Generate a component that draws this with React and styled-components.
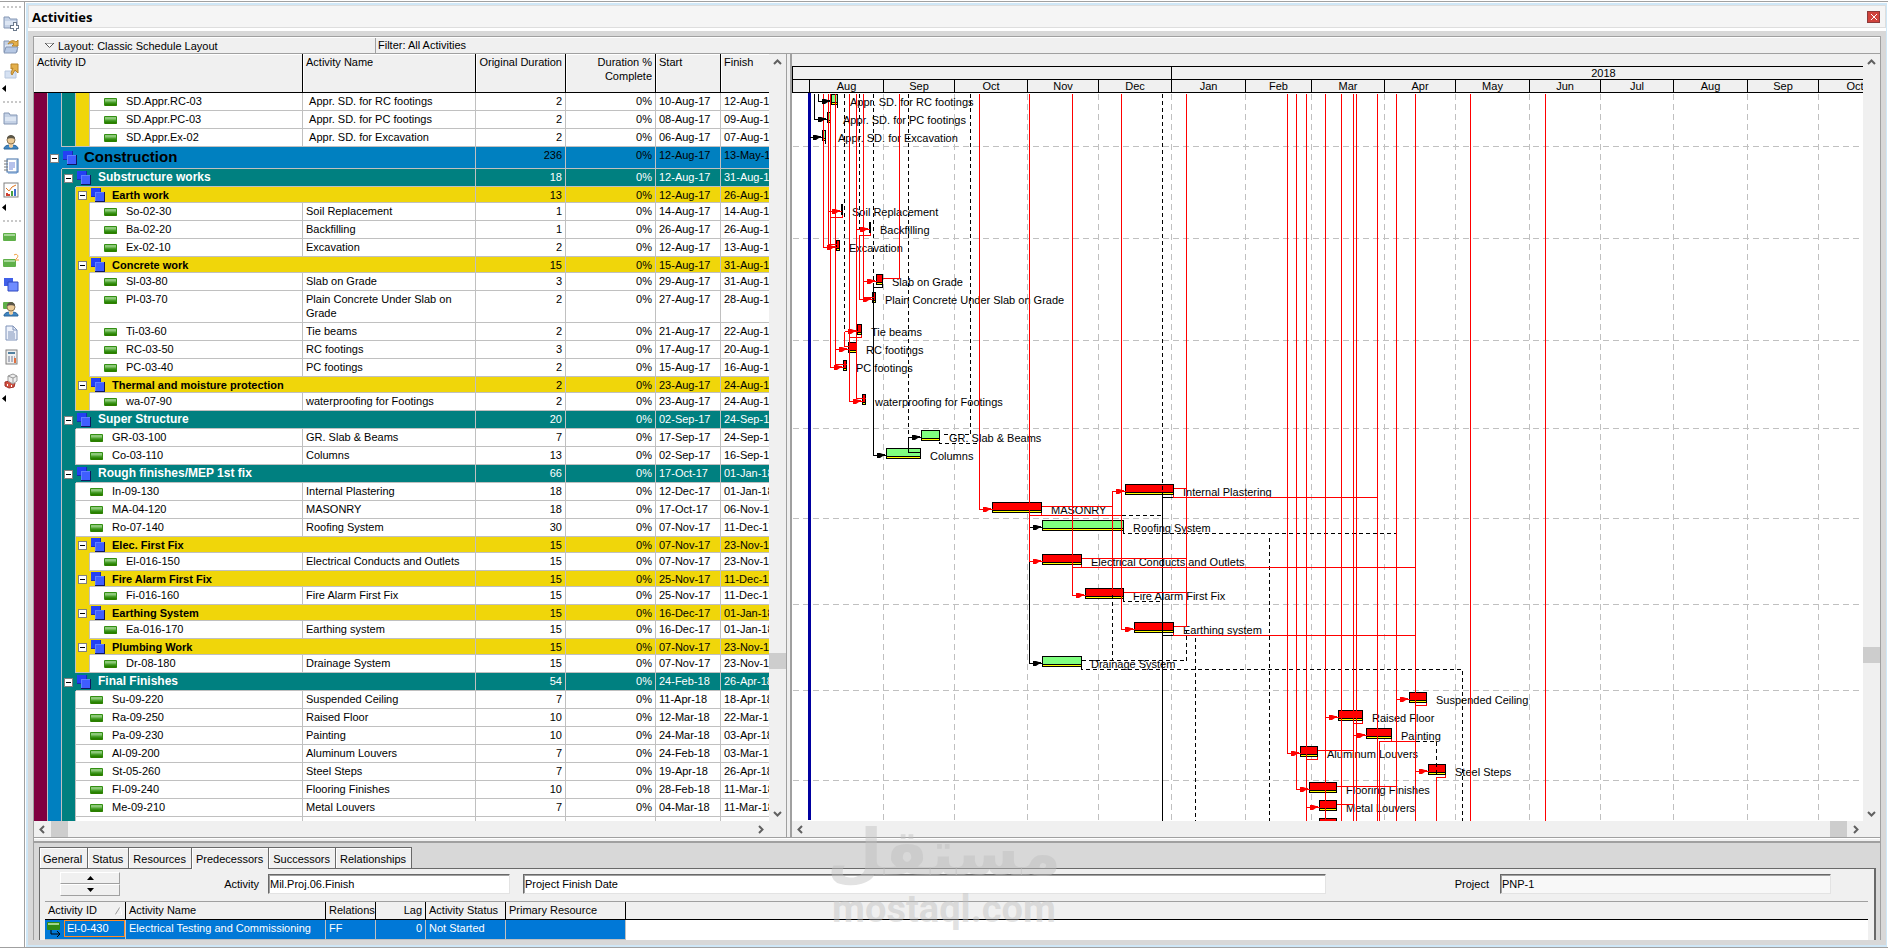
import React from "react";
import styled, { createGlobalStyle } from "styled-components";

const BANDS = ["#800040", "#0080c0", "#008080", "#f0d60a"];

// depth = how many bands stand before the row
const group = (depth, name, dur, start, finish) => ({ group: true, depth, name, dur, start, finish });
const act = (depth, id, name, dur, start, finish) => ({ depth, id, name, dur, start, finish });

const ROWS = [
  act(4, "SD.Appr.RC-03", "\u00a0Appr. SD. for RC footings", 2, "10-Aug-17", "12-Aug-17"),
  act(4, "SD.Appr.PC-03", "\u00a0Appr. SD. for PC footings", 2, "08-Aug-17", "09-Aug-17"),
  act(4, "SD.Appr.Ex-02", "\u00a0Appr. SD. for Excavation", 2, "06-Aug-17", "07-Aug-17"),
  group(1, "Construction", 236, "12-Aug-17", "13-May-18"),
  group(2, "Substructure works", 18, "12-Aug-17", "31-Aug-17"),
  group(3, "Earth work", 13, "12-Aug-17", "26-Aug-17"),
  act(4, "So-02-30", "Soil Replacement", 1, "14-Aug-17", "14-Aug-17"),
  act(4, "Ba-02-20", "Backfilling", 1, "26-Aug-17", "26-Aug-17"),
  act(4, "Ex-02-10", "Excavation", 2, "12-Aug-17", "13-Aug-17"),
  group(3, "Concrete work", 15, "15-Aug-17", "31-Aug-17"),
  act(4, "Sl-03-80", "Slab on Grade", 3, "29-Aug-17", "31-Aug-17"),
  act(4, "Pl-03-70", "Plain Concrete Under Slab on Grade", 2, "27-Aug-17", "28-Aug-17"),
  act(4, "Ti-03-60", "Tie beams", 2, "21-Aug-17", "22-Aug-17"),
  act(4, "RC-03-50", "RC footings", 3, "17-Aug-17", "20-Aug-17"),
  act(4, "PC-03-40", "PC footings", 2, "15-Aug-17", "16-Aug-17"),
  group(3, "Thermal and moisture protection", 2, "23-Aug-17", "24-Aug-17"),
  act(4, "wa-07-90", "waterproofing for Footings", 2, "23-Aug-17", "24-Aug-17"),
  group(2, "Super Structure", 20, "02-Sep-17", "24-Sep-17"),
  act(3, "GR-03-100", "GR. Slab & Beams", 7, "17-Sep-17", "24-Sep-17"),
  act(3, "Co-03-110", "Columns", 13, "02-Sep-17", "16-Sep-17"),
  group(2, "Rough finishes/MEP 1st fix", 66, "17-Oct-17", "01-Jan-18"),
  act(3, "In-09-130", "Internal Plastering", 18, "12-Dec-17", "01-Jan-18"),
  act(3, "MA-04-120", "MASONRY", 18, "17-Oct-17", "06-Nov-17"),
  act(3, "Ro-07-140", "Roofing System", 30, "07-Nov-17", "11-Dec-17"),
  group(3, "Elec. First Fix", 15, "07-Nov-17", "23-Nov-17"),
  act(4, "El-016-150", "Electrical Conducts and Outlets", 15, "07-Nov-17", "23-Nov-17"),
  group(3, "Fire Alarm First Fix", 15, "25-Nov-17", "11-Dec-17"),
  act(4, "Fi-016-160", "Fire Alarm First Fix", 15, "25-Nov-17", "11-Dec-17"),
  group(3, "Earthing System", 15, "16-Dec-17", "01-Jan-18"),
  act(4, "Ea-016-170", "Earthing system", 15, "16-Dec-17", "01-Jan-18"),
  group(3, "Plumbing Work", 15, "07-Nov-17", "23-Nov-17"),
  act(4, "Dr-08-180", "Drainage System", 15, "07-Nov-17", "23-Nov-17"),
  group(2, "Final Finishes", 54, "24-Feb-18", "26-Apr-18"),
  act(3, "Su-09-220", "Suspended Ceiling", 7, "11-Apr-18", "18-Apr-18"),
  act(3, "Ra-09-250", "Raised Floor", 10, "12-Mar-18", "22-Mar-18"),
  act(3, "Pa-09-230", "Painting", 10, "24-Mar-18", "03-Apr-18"),
  act(3, "Al-09-200", "Aluminum Louvers", 7, "24-Feb-18", "03-Mar-18"),
  act(3, "St-05-260", "Steel Steps", 7, "19-Apr-18", "26-Apr-18"),
  act(3, "Fl-09-240", "Flooring Finishes", 10, "28-Feb-18", "11-Mar-18"),
  act(3, "Me-09-210", "Metal Louvers", 7, "04-Mar-18", "11-Mar-18"),
  act(3, "", "", "", "", ""),
];

const rowHeight = (row) => {
  if (!row.group) return row.id === "Pl-03-70" ? 32 : 18;
  return { 1: 22, 2: 18, 3: 16 }[row.depth];
};

// name, width
const MONTHS = [
  ["", 17], ["Aug", 74], ["Sep", 71], ["Oct", 73], ["Nov", 71], ["Dec", 73], ["Jan", 74], ["Feb", 66],
  ["Mar", 73], ["Apr", 71], ["May", 74], ["Jun", 71], ["Jul", 73], ["Aug", 74], ["Sep", 71], ["Oct", 73],
];

const MONTH_X = [883, 954, 1027, 1098, 1171, 1245, 1311, 1384, 1455, 1529, 1600, 1673, 1747, 1818];
const GRID_Y = [146, 238, 340, 428, 518, 604, 690, 780];

// x1, x2, row top, colour, label
const BARS = [
  [831, 837, 93, "g", "Appr. SD. for RC footings", 13],
  [827, 830, 111, "g", "Appr. SD. for PC footings", 13],
  [822, 825, 129, "g", "Appr. SD. for Excavation", 13],
  [841, 842, 203, "r", "Soil Replacement"],
  [869, 870, 221, "r", "Backfilling"],
  [836, 839, 239, "r", "Excavation"],
  [876, 882, 273, "r", "Slab on Grade"],
  [872, 875, 291, "r", "Plain Concrete Under Slab on Grade"],
  [857, 861, 323, "r", "Tie beams"],
  [848, 856, 341, "r", "RC footings"],
  [843, 846, 359, "r", "PC footings"],
  [862, 865, 393, "r", "waterproofing for Footings"],
  [921, 939, 429, "g", "GR. Slab & Beams"],
  [886, 920, 447, "g", "Columns"],
  [1125, 1173, 483, "r", "Internal Plastering"],
  [992, 1041, 501, "r", "MASONRY"],
  [1042, 1123, 519, "g", "Roofing System"],
  [1042, 1081, 553, "r", "Electrical Conducts and Outlets"],
  [1085, 1123, 587, "r", "Fire Alarm First Fix"],
  [1134, 1173, 621, "r", "Earthing system"],
  [1042, 1081, 655, "g", "Drainage System"],
  [1409, 1426, 691, "r", "Suspended Ceiling"],
  [1338, 1362, 709, "r", "Raised Floor"],
  [1366, 1391, 727, "r", "Painting"],
  [1300, 1317, 745, "r", "Aluminum Louvers"],
  [1428, 1445, 763, "r", "Steel Steps"],
  [1309, 1336, 781, "r", "Flooring Finishes"],
  [1319, 1336, 799, "r", "Metal Louvers"],
  [1319, 1336, 817, "r", ""],
];

const DASHED_LINKS = [
  "M844 93V331", "M859 93V229", "M873 93V287", "M908 93V434", "M970 93V434H940",
  "M939 441V443H979", "M1162 93V497", "M1121 515H1162", "M1123 530V533H1396", "M1269 537V820",
  "M1112 594V660", "M1123 598V601H1162", "M1081 660H1186V630", "M1195 637V820",
  "M1081 666V669H1462V820", "M1415 741H1436V777",
];

const BLACK_LINKS = [
  "M818 93V101H831", "M814 93V119H827", "M809 137H822", "M837 104V107", "M825 140V143",
  "M882 284V287H873V455H886", "M920 452H908V437H921", "M1029 527H1042", "M1029 561V663H1042",
  "M1173 497H1162V820", "M1162 635H1173",
];

const RED_LINKS = [
  "M823 93V247H836", "M828 93V244H838", "M828 211H841", "M830 93V367H843", "M842 214V217H830",
  "M835 93V364H846", "M835 349H848", "M849 93V401H862", "M861 334V337H849", "M844 331H857M844 331V346H849",
  "M856 93V398H865", "M856 229H869", "M870 232V235H859V299H872", "M863 93V297H874", "M863 281H876",
  "M899 93V278H882", "M979 93V509H992", "M1029 93V561H1042", "M1041 512V515M1029 515H1121",
  "M1072 93V595H1085", "M1081 564V567M1072 567H1415", "M1041 506H1112M1112 592V491H1125",
  "M1121 93V629H1134", "M1186 93V626H1173", "M1081 558H1186", "M1123 592H1186", "M1173 488H1186",
  "M1173 494V497H1377", "M1173 632V635H1415", "M1287 93V753H1300", "M1296 93V789H1309",
  "M1306 93V820M1306 807H1319", "M1306 759H1317V756", "M1325 93V820M1325 717H1338", "M1341 93V820",
  "M1353 93V820M1353 735H1366", "M1353 723H1362V720", "M1317 750H1353", "M1336 804H1353", "M1356 93V820",
  "M1377 93V820", "M1379 820V741H1415", "M1391 738V741", "M1436 820V777H1445V774", "M1336 786H1396",
  "M1396 93V820M1396 699H1409", "M1415 93V820M1415 771H1428", "M1415 705H1426V702", "M1470 93V820",
  "M1545 93V820",
];

// tip x, y, colour
const ARROWS = [
  [831, 101, "#000"], [827, 119, "#000"], [822, 137, "#000"], [886, 455, "#000"], [921, 437, "#000"],
  [1042, 527, "#000"], [1042, 663, "#000"], [836, 247, "red"], [841, 211, "red"], [843, 367, "red"],
  [848, 349, "red"], [862, 401, "red"], [857, 331, "red"], [869, 229, "red"], [872, 299, "red"],
  [876, 281, "red"], [992, 509, "red"], [1042, 561, "red"], [1085, 595, "red"], [1125, 491, "red"],
  [1134, 629, "red"], [1300, 753, "red"], [1309, 789, "red"], [1319, 807, "red"], [1338, 717, "red"],
  [1366, 735, "red"], [1409, 699, "red"], [1428, 771, "red"],
];

const ActivityIcon = () => (
  <svg width="13" height="8" viewBox="0 0 13 8" aria-hidden="true">
    <rect width="13" height="8" rx="1" fill="#338f12" />
    <path d="M1 1h11v2H1z" fill="#8cc878" />
    <path d="M1 3h11v1H1z" fill="#6cb652" />
    <path d="M1 4h11v1H1z" fill="#4a9e2a" />
    <path d="M1 6h12v1l-1 1H1z" fill="#2b8000" />
  </svg>
);

const WbsIcon = () => (
  <svg width="14" height="14" viewBox="0 0 14 14" shapeRendering="crispEdges" aria-hidden="true">
    <rect x="0" y="0" width="10" height="9" fill="#1a2ab0" />
    <rect x="0" y="0" width="9" height="8" fill="#2440f4" />
    <rect x="4" y="4" width="10" height="10" fill="#101860" />
    <rect x="4" y="4" width="9" height="9" fill="#6080ff" />
    <rect x="5" y="5" width="8" height="8" fill="#3f5eff" />
  </svg>
);

const Chevron = ({ dir }) => {
  const turn = { up: 0, right: 90, down: 180, left: 270 }[dir];
  return (
    <svg width="9" height="9" viewBox="0 0 9 9" aria-hidden="true">
      <path d="M1 6L4.500 2.500L8 6" transform={`rotate(${turn} 4.500 4.500)`} fill="none" stroke="#606060" strokeWidth="2" />
    </svg>
  );
};

const Folder = ({ y = 3 }) => (
  <g>
    <path d={`M1 ${y}h5l1 2h7v9H1z`} fill="#c5d2e6" stroke="#8496b4" />
    <path d={`M2 ${y + 4}h11v4H2z`} fill="#dde6f3" />
  </g>
);
const Person = () => (
  <g>
    <path d="M1 15c0-3 3-4 7-4s7 1 7 4z" fill="#3f86c4" stroke="#2a6498" />
    <path d="M6 10h4v3l-2 1-2-1z" fill="#f0cfa0" />
    <circle cx="8" cy="6" r="4" fill="#eccb98" stroke="#8a7450" />
    <path d="M4 5c0-3 2-4 4-4s4 1 4 4c-2-1-6-1-8 0z" fill="#5b5648" />
  </g>
);

const TOOLS = [
  ["Add project", <><Folder y={2} /><path d="M12 7v9M7 12h9" stroke="#6c7a8c" strokeWidth="4" /><path d="M12 8v7M8 12h7" stroke="#fff" strokeWidth="2" /></>],
  ["Open project", <><Folder y={2} /><path d="M1 14l2-6h12l-2 6z" fill="#b6c8e4" stroke="#8496b4" /><path d="M5 5c2-4 6-4 8-2l2-2v6h-6l2-2c-2-2-4-1-6 0z" fill="#e4b04c" stroke="#b98428" /></>],
  ["Close project", <><path d="M2 8h11v7H2z" fill="#d5e1f2" stroke="#b6c6dd" /><path d="M8 1h7v9l-3-3-3 5-1-2 2-5-2 1z" fill="#e4b04c" stroke="#b98428" /></>],
  "more",
  "grip",
  ["Projects", <Folder />],
  ["Resources", <Person />],
  ["Reports", <><rect x="4" y="1" width="11" height="13" fill="#fff" stroke="#3f6ea8" /><path d="M14 2v13H5" fill="none" stroke="#5b8cc8" /><path d="M6 5h6M6 7h6M6 9h6M6 11h4" stroke="#6c84d8" /><path d="M1 3h4M1 6h4M1 9h4M1 12h4" stroke="#777" /></>],
  ["Tracking", <><rect x="1" y="1" width="14" height="14" fill="#fff" stroke="#808080" /><path d="M3 6l3 3 3-4 4-2" fill="none" stroke="#e07820" /><path d="M4 14v-3M6 14v-2" stroke="#d04030" strokeWidth="2" /><path d="M9 14V9" stroke="#48a040" strokeWidth="2" /><path d="M12 14V7" stroke="#4070d0" strokeWidth="2" /></>],
  "more",
  "grip",
  ["Activities", <><rect x="0" y="4" width="13" height="8" rx="1" fill="#5fb049" /><path d="M1 6h11" stroke="#a5d796" strokeWidth="2" /></>],
  ["Steps", <><rect x="0" y="6" width="13" height="8" rx="1" fill="#5fb049" /><path d="M1 8h11" stroke="#a5d796" strokeWidth="2" /><path d="M11 2c3-2 5 1 3 3l-2 2h4" fill="none" stroke="#f0a040" /></>],
  ["WBS", <><path d="M1 1h9v8H1z" fill="#4060e8" /><path d="M5 5h10v9H5z" fill="#6f8cff" stroke="#3048c0" /></>],
  ["Assignments", <><rect x="0" y="1" width="10" height="7" rx="1" fill="#5fb049" /><Person /></>],
  ["Documents", <><path d="M3 1h7l4 4v10H3z" fill="#eef2fb" stroke="#7f92b8" /><path d="M10 1v4h4M5 7h6M5 9h7M5 11h7M5 13h7" fill="none" stroke="#7f92b8" /></>],
  ["Expenses", <><rect x="3" y="1" width="11" height="14" fill="#f0f0f0" stroke="#808080" /><path d="M5 4h7" stroke="#5080a0" strokeWidth="2" /><path d="M5 8h7M5 10h7M5 12h7" stroke="#707890" strokeDasharray="2 1" /><path d="M11 9h2v5h-2z" fill="#e07040" /></>],
  ["Risks", <><path d="M2 9l5-1 5 2-1 4-5 1-4-2z" fill="#d05040" stroke="#a03028" /><path d="M4 12h1M8 13h1" stroke="#fff" strokeWidth="2" /><path d="M5 3l5-2 4 2v5l-4 3-5-3z" fill="#eee" stroke="#999" /><path d="M5 3l5 2 4-2M10 5v6" fill="none" stroke="#999" /></>],
  "more",
];

const SideTools = () => (
  <Toolbar aria-label="Directory">
    <Grip />
    {TOOLS.map((tool, i) => {
      if (tool === "grip") return <Grip key={i} />;
      if (tool === "more") {
        return (
          <MoreButton key={i} aria-label="More">
            <svg width="4" height="7" viewBox="0 0 4 7"><path d="M4 0v7L0 3.500z" /></svg>
          </MoreButton>
        );
      }
      return (
        <ToolButton key={i} aria-label={tool[0]}>
          <svg width="16" height="16" viewBox="0 0 16 16">{tool[1]}</svg>
        </ToolButton>
      );
    })}
  </Toolbar>
);

const ScrollBar = ({ vertical, before, after }) => (
  <Bar $vertical={vertical}>
    <BarButton aria-label="Scroll back"><Chevron dir={vertical ? "up" : "left"} /></BarButton>
    <BarSpace $grow={before} />
    <Thumb />
    <BarSpace $grow={after} />
    <BarButton aria-label="Scroll forward"><Chevron dir={vertical ? "down" : "right"} /></BarButton>
  </Bar>
);

const GridRow = ({ row, next }) => {
  const h = rowHeight(row);
  const bands = BANDS.slice(0, row.depth);
  const cut = next && next.group ? next.depth : 9;
  return (
    <Row $bg={row.group ? BANDS[row.depth] : "#fff"} $light={row.group && row.depth === 2}>
      <IdCell colSpan={row.group ? 2 : 1}>
        <Tree $h={h}>
          {bands.map((color, i) => <Band key={color} $color={color} $end={!row.group && i > cut} />)}
          {row.group && (
            <Stub>
              <Toggle aria-label={"Collapse " + row.name} />
            </Stub>
          )}
          <TreeBody $level={row.group ? row.depth : 0}>
            {row.group ? <WbsIcon /> : row.id && <ActivityIcon />}
            <TreeText $level={row.group ? row.depth : 0}>{row.group ? row.name : row.id}</TreeText>
          </TreeBody>
        </Tree>
      </IdCell>
      {!row.group && <Cell>{row.name}</Cell>}
      <Cell $right>{row.dur}</Cell>
      <Cell $right>{row.dur === "" ? "" : "0%"}</Cell>
      <Cell>{row.start}</Cell>
      <Cell>{row.finish}</Cell>
    </Row>
  );
};

const Gantt = () => (
  <Chart role="img" aria-label="Gantt chart">
    {/* coordinates below count from the window corner; the chart area starts at 792, 93 */}
    <g transform="translate(-792 -93)">
      <g shapeRendering="crispEdges" fill="none" stroke="#c0c0c0" strokeDasharray="6 4" transform="translate(0.500 0.500)">
        {MONTH_X.map((x) => <path key={x} d={`M${x} 93V820`} />)}
        {GRID_Y.map((y) => <path key={y} d={`M792 ${y}H4000`} />)}
      </g>
      <path d="M808 93h3v727h-3z" fill="#0000a0" />
      {BARS.map(([x1, x2, top, kind, label, gap = 10], i) => (
        <g key={i}>
          <rect x={x1} y={top + 1} width={x2 - x1 + 1} height="11" fill="#000" />
          {x2 - x1 > 1 && <rect x={x1 + 1} y={top + 2} width={x2 - x1 - 1} height="7" fill={kind === "r" ? "#f00" : "#80ff80"} />}
          {x2 - x1 > 1 && <rect x={x1 + 1} y={top + 10} width={x2 - x1 - 1} height="1" fill="#ff0" />}
          <text x={x2 + gap} y={top + 13}>{label}</text>
        </g>
      ))}
      <g shapeRendering="crispEdges" fill="none" transform="translate(0.500 0.500)">
        <path d={DASHED_LINKS.join("")} stroke="#000" strokeDasharray="4 3" />
        <path d={BLACK_LINKS.join("")} stroke="#000" />
        <path d={RED_LINKS.join("")} stroke="red" />
      </g>
      {ARROWS.map(([x, y, color]) => (
        <path key={x + "-" + y} d={`M${x - 9} ${y - 2}h3l3 1h2v2h-2l-3 2h-3z`} fill={color} />
      ))}
    </g>
  </Chart>
);

const TABS = ["General", "Status", "Resources", "Predecessors", "Successors", "Relationships"];

const Details = () => (
  <DetailArea>
    <Tabs role="tablist">
      {TABS.map((tab) => (
        <Tab key={tab} role="tab" aria-selected={tab === "Predecessors"} $active={tab === "Predecessors"}>{tab}</Tab>
      ))}
    </Tabs>
    <DetailPanel>
      <Form>
        <Spinner>
          <SpinButton aria-label="Previous activity"><svg width="7" height="4"><path d="M0 4h7L3.500 0z" /></svg></SpinButton>
          <SpinButton aria-label="Next activity"><svg width="7" height="4"><path d="M0 0h7L3.500 4z" /></svg></SpinButton>
        </Spinner>
        <Label htmlFor="activity">Activity</Label>
        <IdInput id="activity" readOnly value="Mil.Proj.06.Finish" />
        <NameInput aria-label="Activity name" readOnly value="Project Finish Date" />
        <ProjectLabel htmlFor="project">Project</ProjectLabel>
        <ProjectInput id="project" readOnly value="PNP-1" />
      </Form>
      <LinkTable>
        <colgroup>
          <col width="81" /><col width="200" /><col width="50" /><col width="50" /><col width="80" /><col width="120" /><col />
        </colgroup>
        <thead>
          <tr>
            <LinkHead>Activity ID <SortMark width="7" height="9"><path d="M0 9L5 1" stroke="#999" /><path d="M0 9h7L5 1" fill="none" stroke="#fff" /></SortMark></LinkHead>
            <LinkHead>Activity Name</LinkHead>
            <LinkHead>Relations</LinkHead>
            <LinkHead $right>Lag</LinkHead>
            <LinkHead>Activity Status</LinkHead>
            <LinkHead>Primary Resource</LinkHead>
            <LinkHead $last />
          </tr>
        </thead>
        <tbody>
          <tr>
            <LinkCell $flush>
              <LinkId>
                <svg width="19" height="17" viewBox="0 0 19 17">
                  <rect x="2" y="2" width="13" height="8" rx="1" fill="#2f8a12" />
                  <path d="M3 4h11" stroke="#9fd48a" strokeWidth="2" />
                  <path d="M6 10v4h9M12 11l3 3-3 3" fill="none" stroke="#000" />
                </svg>
                <Focused>El-0-430</Focused>
              </LinkId>
            </LinkCell>
            <LinkCell>Electrical Testing and Commissioning</LinkCell>
            <LinkCell>FF</LinkCell>
            <LinkCell $right>0</LinkCell>
            <LinkCell>Not Started</LinkCell>
            <LinkCell />
            <td />
          </tr>
        </tbody>
      </LinkTable>
    </DetailPanel>
  </DetailArea>
);

const App = () => {
  return (
    <Page>
      <GlobalStyle />
      <SideTools />
      <Window>
        <Frame>
          <TitleBar>
            <Title>Activities</Title>
            <CloseButton aria-label="Close">
              <svg width="6" height="6"><path d="M0 0l6 6M6 0L0 6" stroke="#fff" strokeWidth="1" /></svg>
            </CloseButton>
          </TitleBar>
          <Surround>
            <Panel>
              <LayoutBar>
                <LayoutButton>
                  <svg width="9" height="5"><path d="M0 0h9L4.500 4.500z" fill="#fff" stroke="#555" /></svg>
                  Layout: Classic Schedule Layout
                </LayoutButton>
                <FilterText>Filter: All Activities</FilterText>
              </LayoutBar>
              <Split>
                <GridPane>
                  <PaneMain>
                    <GridClip>
                      <Table>
                        <colgroup>
                          <col width="269" /><col width="173" /><col width="90" /><col width="90" /><col width="65" /><col width="66" />
                        </colgroup>
                        <thead>
                          <tr>
                            <Head>Activity ID</Head>
                            <Head>Activity Name</Head>
                            <Head $right>Original Duration</Head>
                            <Head $right>Duration %<br />Complete</Head>
                            <Head>Start</Head>
                            <Head>Finish</Head>
                          </tr>
                        </thead>
                        <tbody>
                          {ROWS.map((row, i) => <GridRow key={i} row={row} next={ROWS[i + 1]} />)}
                        </tbody>
                      </Table>
                    </GridClip>
                    <ScrollBar vertical before={581} after={136} />
                  </PaneMain>
                  <GridFoot><ScrollBar before={0} after={680} /></GridFoot>
                </GridPane>
                <Divider />
                <ChartPane>
                  <PaneMain>
                    <ChartClip>
                      <Timescale>
                        <ScaleRow>
                          <ScaleCell $w={379} />
                          <ScaleCell $w={864}>2018</ScaleCell>
                        </ScaleRow>
                        <ScaleRow>
                          {MONTHS.map(([m, w], i) => <ScaleCell key={i} $w={w}>{m}</ScaleCell>)}
                        </ScaleRow>
                      </Timescale>
                      <Gantt />
                    </ChartClip>
                    <ScrollBar vertical before={575} after={142} />
                  </PaneMain>
                  <ChartFoot><ScrollBar before={1020} after={0} /></ChartFoot>
                </ChartPane>
              </Split>
              <HSplitter />
              <Details />
            </Panel>
          </Surround>
        </Frame>
      </Window>
      <Watermark aria-hidden="true">
        <WatermarkArabic lang="ar" dir="rtl">مستقل</WatermarkArabic>
        <WatermarkLatin>mostaql.com</WatermarkLatin>
      </Watermark>
    </Page>
  );
};

export default App;

const GlobalStyle = createGlobalStyle`
  body {
    margin: 0;
    background: #fff;
    color: #000;
    font-family: "Liberation Sans", Arial, sans-serif;
    font-size: 11px;
    line-height: 14px;
  }

  button, input {
    padding: 0;
    border: 0;
    background: none;
    color: inherit;
    font: inherit;
  }

  * {
    box-sizing: border-box;
  }
`;

const Page = styled.div`
  position: relative;
  display: flex;
  height: 100vh;
  padding-top: 1px;
  border-bottom: 1px solid #a0a0a0;
  overflow: hidden;
`;

const Toolbar = styled.nav`
  display: flex;
  flex-direction: column;
  width: 25px;
  padding: 4px 3px 0;
  border-top: 1px solid #a0a0a0;
  border-right: 1px solid #a0a0a0;
`;
const Grip = styled.div`
  height: 3px;
  margin-bottom: 2px;
  background: repeating-linear-gradient(90deg, #c8c8c8 0 2px, transparent 2px 4px) 0 0 / 100% 2px no-repeat;
`;
const ToolButton = styled.button`
  display: flex;
  flex: none;
  align-items: center;
  height: 24px;
`;
const MoreButton = styled.button`
  display: flex;
  align-items: center;
  height: 10px;
  margin: 0 0 8px -1px;
`;

const Window = styled.main`
  display: flex;
  flex: 1;
  min-width: 0;
  padding: 1px 1px 0;
  border-top: 1px solid #a0a0a0;
`;
const Frame = styled.div`
  display: flex;
  flex: 1;
  flex-direction: column;
  min-width: 0;
  border: 2px solid #cfe7f7;
  border-right-width: 1px;
`;
const TitleBar = styled.header`
  display: flex;
  align-items: center;
  justify-content: space-between;
  height: 23px;
  margin-bottom: 3px;
  padding: 0 5px 0 3px;
  border: 1px solid #dedede;
  background: #f5f5f5;
`;
const Title = styled.h1`
  margin: 0;
  font-family: "Open Sans", "Noto Sans", sans-serif;
  font-size: 13px;
  font-weight: bold;
`;
const CloseButton = styled.button`
  display: flex;
  align-items: center;
  justify-content: center;
  width: 13px;
  height: 12px;
  border: 1px solid #8c3a3a;
  background: #d0433c;
`;
const Surround = styled.div`
  display: flex;
  flex: 1;
  min-height: 0;
  padding: 5px;
  background: #d8d8d8;
`;
const Panel = styled.section`
  display: flex;
  flex: 1;
  flex-direction: column;
  min-width: 0;
  border: 1px solid #a0a0a0;
  border-bottom: 0;
  background: #f0f0f0;
`;
const LayoutBar = styled.div`
  display: flex;
  height: 17px;
  border-top: 1px solid #fff;
  border-bottom: 1px solid #a0a0a0;
`;
const LayoutButton = styled.button`
  display: flex;
  align-items: center;
  gap: 4px;
  width: 342px;
  padding-left: 11px;
  border-right: 1px solid #a0a0a0;
`;
const FilterText = styled.div`
  padding: 0 2px;
`;

const Split = styled.div`
  display: flex;
  flex: 1;
  min-height: 0;
`;
const GridPane = styled.div`
  display: flex;
  flex: none;
  flex-direction: column;
  width: 752px;
`;
const PaneMain = styled.div`
  display: flex;
  flex: 1;
  min-height: 0;
`;
const GridClip = styled.div`
  flex: 1;
  min-width: 0;
  overflow: hidden;
`;
const GridFoot = styled.div`
  padding-right: 17px;
`;
const ChartFoot = styled.div`
  padding-right: 16px;
`;
const Divider = styled.div`
  width: 6px;
  border-left: 1px solid #a0a0a0;
  border-right: 2px solid #a0a0a0;
`;
const HSplitter = styled.div`
  flex: none;
  height: 6px;
  border-top: 1px solid #a0a0a0;
  border-bottom: 2px solid #a0a0a0;
  box-shadow: inset 0 1px #fff;
`;

const Table = styled.table`
  width: 753px;
  table-layout: fixed;
  border-spacing: 0;
`;
const Head = styled.th`
  height: 39px;
  padding: 1px 3px;
  border-right: 1px solid #000;
  border-bottom: 1px solid #000;
  box-shadow: inset 1px 1px #fff;
  font-weight: normal;
  text-align: ${({ $right }) => ($right ? "right" : "left")};
  vertical-align: top;
`;
const Row = styled.tr`
  background: ${({ $bg }) => $bg};
  color: ${({ $light }) => ($light ? "#fff" : "#000")};
`;
const Cell = styled.td`
  padding: 1px 3px 0;
  border-right: 1px solid #c0c0c0;
  border-bottom: 1px solid #c0c0c0;
  text-align: ${({ $right }) => ($right ? "right" : "left")};
  vertical-align: top;
`;
const IdCell = styled.td`
  padding: 0;
  border-right: 1px solid #c0c0c0;
`;
const Tree = styled.div`
  display: flex;
  height: ${({ $h }) => $h}px;
`;
const Band = styled.div`
  flex: none;
  width: 14px;
  border-right: 1px solid #c0c0c0;
  border-bottom: ${({ $end }) => ($end ? "1px solid #c0c0c0" : "0")};
  background: ${({ $color }) => $color};
`;
const Stub = styled.div`
  display: flex;
  flex: none;
  align-items: center;
  width: 14px;
  padding-left: 2px;
`;
const Toggle = styled.button`
  width: 9px;
  height: 9px;
  border: 1px solid #808080;
  background: linear-gradient(#000, #000) center / 5px 1px no-repeat #fff;
`;
const TreeBody = styled.div`
  display: flex;
  flex: 1;
  align-items: flex-start;
  gap: ${({ $level }) => ($level ? "7px" : "9px")};
  padding: ${({ $level }) => ($level ? "1px 0 0 1px" : "1px 0 0 14px")};
  border-bottom: 1px solid #c0c0c0;

  svg {
    flex: none;
    margin-top: ${({ $level }) => [4, 3, 1, 0][$level]}px;
  }
`;
const TreeText = styled.span`
  margin-top: ${({ $level }) => ($level === 1 ? 1 : 0)}px;
  font-size: ${({ $level }) => [11, 15, 12, 11][$level]}px;
  line-height: ${({ $level }) => ($level === 1 ? 16 : 14)}px;
  font-weight: ${({ $level }) => ($level ? "bold" : "normal")};
  white-space: nowrap;
`;

const Bar = styled.div`
  display: flex;
  flex: none;
  flex-direction: ${({ $vertical }) => ($vertical ? "column" : "row")};
  ${({ $vertical }) => ($vertical ? "width: 17px;" : "height: 16px;")}
  background: #f0f0f0;
`;
const BarButton = styled.button`
  display: flex;
  flex: none;
  align-items: center;
  justify-content: center;
  width: 17px;
  height: 16px;
`;
const BarSpace = styled.div`
  flex: ${({ $grow }) => $grow} 1 0;
`;
const Thumb = styled.div`
  width: 17px;
  height: 16px;
  background: #cdcdcd;
`;

const ChartPane = styled.div`
  display: flex;
  flex: 1;
  flex-direction: column;
  min-width: 0;
`;
const ChartClip = styled.div`
  display: flex;
  flex: 1;
  flex-direction: column;
  min-width: 0;
  overflow: hidden;
`;
const Timescale = styled.div`
  flex: none;
  height: 39px;
  padding-top: 12px;
  border-bottom: 1px solid #000;
`;
const ScaleRow = styled.div`
  display: flex;
  height: 13px;
  border-top: 1px solid #000;
`;
const ScaleCell = styled.div`
  flex: none;
  width: ${({ $w }) => $w}px;
  border-left: 1px solid #000;
  line-height: 13px;
  text-align: center;
`;
const Chart = styled.svg`
  display: block;
  flex: 1;
  width: 100%;
  min-height: 0;
  background: #fff;
`;

const DetailArea = styled.section`
  flex: none;
  display: flex;
  flex-direction: column;
  height: 97px;
  padding: 4px 4px 0 5px;
  background: #d8d8d8;
`;
const Tabs = styled.div`
  position: relative;
  display: flex;
`;
const Tab = styled.button`
  height: ${({ $active }) => ($active ? 22 : 21)}px;
  margin-bottom: ${({ $active }) => ($active ? "-1px" : "0")};
  padding: 1px 5px 0 4px;
  border: solid #696969;
  border-width: 1px 1px 0 0;
  background: #f0f0f0;
  box-shadow: inset 1px 1px #fff;

  &:first-child {
    padding-left: 3px;
    border-left-width: 1px;
  }
`;
const DetailPanel = styled.div`
  flex: 1;
  padding: 0 6px 0 5px;
  border: solid #696969;
  border-width: 1px 2px 0 1px;
  background: #f0f0f0;
`;
const Form = styled.div`
  display: flex;
  align-items: center;
  height: 32px;
  padding: 0 37px 2px 15px;
`;
const Spinner = styled.div`
  display: flex;
  flex-direction: column;
  width: 60px;
`;
const SpinButton = styled.button`
  display: flex;
  align-items: center;
  justify-content: center;
  height: 12px;
  border: 1px solid;
  border-color: #fff #a0a0a0 #a0a0a0 #fff;
`;
const Label = styled.label`
  width: 148px;
  padding-right: 9px;
  text-align: right;
`;
const ProjectLabel = styled(Label)`
  width: 174px;
  padding-right: 11px;
`;
const TextInput = styled.input`
  height: 20px;
  padding: 0 1px;
  border: 1px solid;
  border-color: #696969 #e3e3e3 #e3e3e3 #696969;
  background: #fff;
  box-shadow: inset 1px 1px #a0a0a0;
`;
const IdInput = styled(TextInput)`
  width: 242px;
  margin-right: 13px;
`;
const NameInput = styled(TextInput)`
  flex: 1;
  min-width: 0;
`;
const ProjectInput = styled(TextInput)`
  width: 331px;
  background: #f8f8f8;
`;
const LinkTable = styled.table`
  width: 100%;
  height: 39px;
  table-layout: fixed;
  border-top: 1px solid #a0a0a0;
  border-spacing: 0;
  background: #fff;
`;
const LinkHead = styled.th`
  height: 18px;
  padding: 0 3px 1px;
  border-right: ${({ $last }) => ($last ? "0" : "1px solid #000")};
  border-bottom: 1px solid #000;
  background: #f0f0f0;
  font-weight: normal;
  text-align: ${({ $right }) => ($right ? "right" : "left")};
  white-space: nowrap;
`;
const SortMark = styled.svg`
  float: right;
  margin-top: 3px;
`;
const LinkCell = styled.td`
  height: 18px;
  padding: ${({ $flush }) => ($flush ? "0" : "1px 3px 0")};
  border-right: 1px solid #c0c0c0;
  border-bottom: 1px solid #c0c0c0;
  background: #0078d7;
  color: #fff;
  text-align: ${({ $right }) => ($right ? "right" : "left")};
  vertical-align: top;
  white-space: nowrap;
`;
const LinkId = styled.div`
  display: flex;
`;
const Focused = styled.span`
  flex: 1;
  height: 17px;
  padding: 0 2px;
  border: 1px solid #ff8c28;
`;

const Watermark = styled.div`
  position: absolute;
  bottom: 20px;
  left: 50%;
  display: flex;
  flex-direction: column;
  align-items: center;
  transform: translateX(-50%);
  color: rgba(190, 190, 190, 0.45);
  font-weight: bold;
  pointer-events: none;
`;
const WatermarkArabic = styled.span`
  font-family: "DejaVu Sans", sans-serif;
  font-size: 64px;
  line-height: 76px;
`;
const WatermarkLatin = styled.span`
  font-family: Roboto, sans-serif;
  font-size: 38px;
  line-height: 36px;
`;
